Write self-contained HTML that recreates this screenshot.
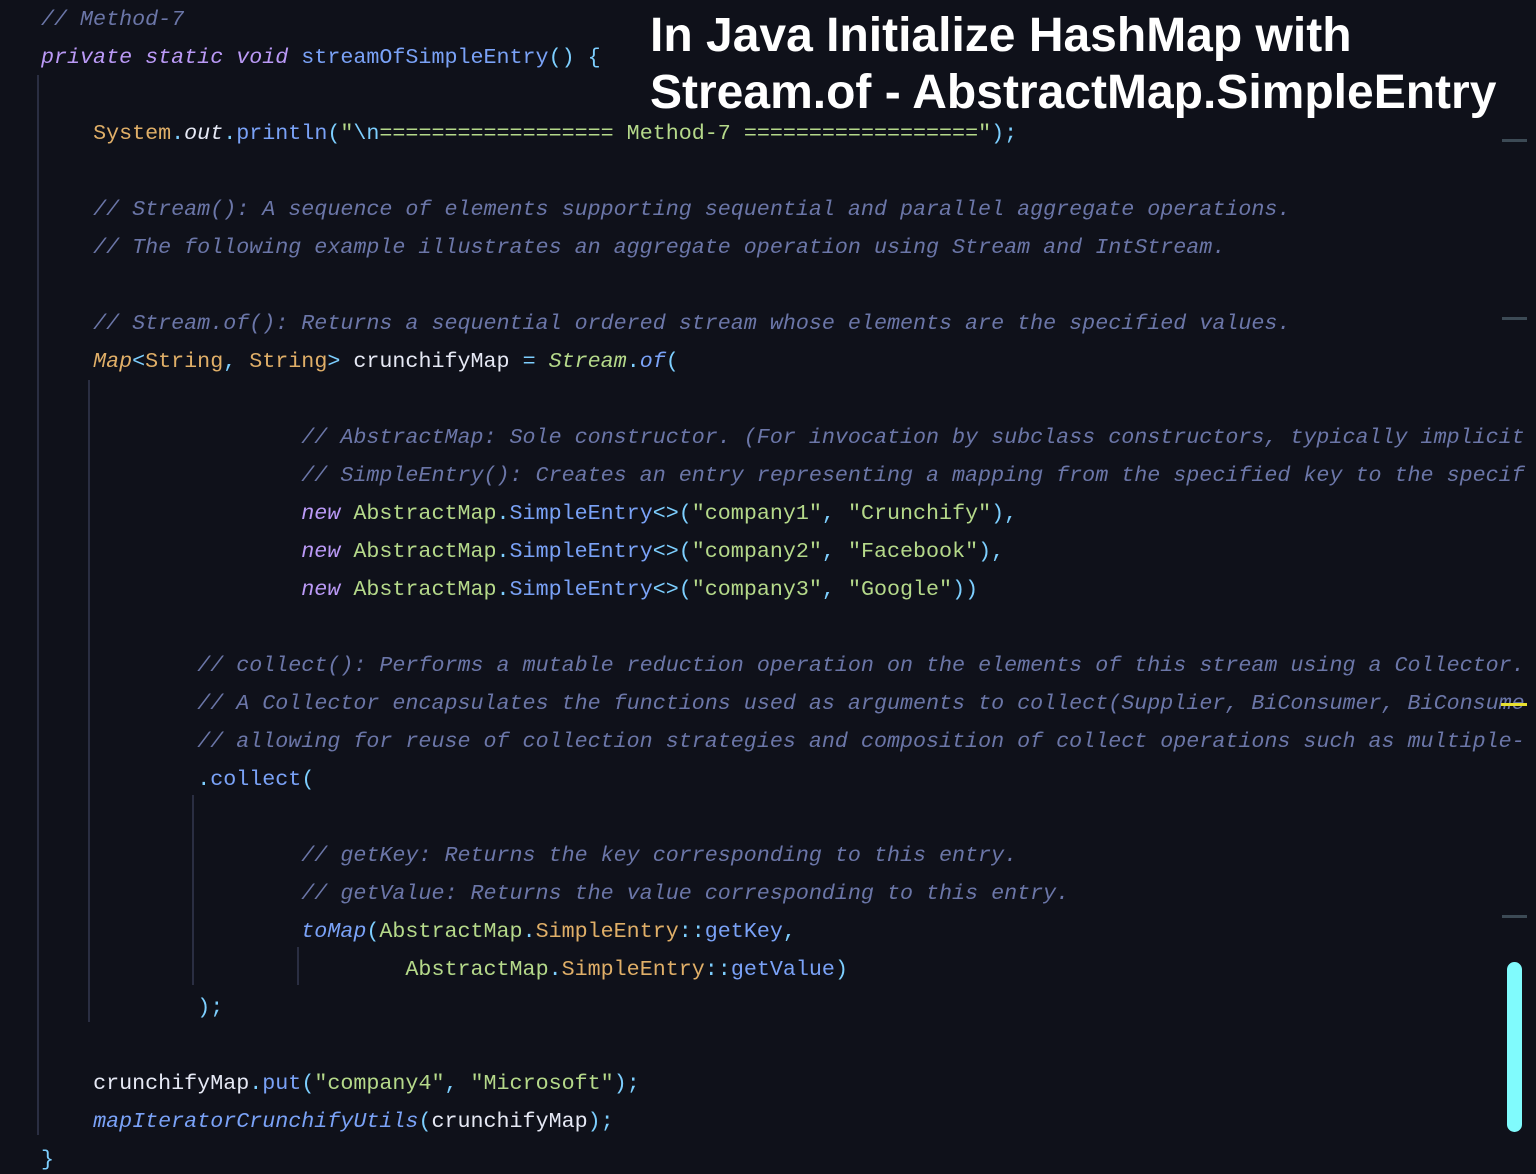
<!DOCTYPE html>
<html><head><meta charset="utf-8"><style>
html,body{margin:0;padding:0;background:#0f111a;width:1536px;height:1174px;overflow:hidden;position:relative}
pre{position:absolute;left:41px;top:1px;margin:0;font-family:"Liberation Mono",monospace;font-size:21.7px;line-height:38px;color:#c0caf5;white-space:pre}
.c{color:#6b76a8;font-style:italic}
.k{color:#bb9af7;font-style:italic}
.f{color:#7aa2f7}
.fi{color:#7aa2f7;font-style:italic}
.p{color:#7dcfff}
.s{color:#b5d98a}
.o{color:#e0af68}
.w{color:#e6e9f5}
.wi{color:#e6e9f5;font-style:italic}
.g{position:absolute;width:2px;background:#2a2e42}
.d{position:absolute;left:1502px;width:25px;height:3px;background:#3c4a55}
h1{position:absolute;left:650px;top:7px;margin:0;font-family:"Liberation Sans",sans-serif;font-weight:bold;font-size:48px;line-height:57px;color:#fff}
</style></head><body>
<div class="g" style="left:37px;top:75px;height:1060px"></div>
<div class="g" style="left:88px;top:380px;height:642px"></div>
<div class="g" style="left:192px;top:795px;height:190px"></div>
<div class="g" style="left:297px;top:947px;height:38px"></div>
<pre><span class="c">// Method-7</span>
<span class="k">private static void</span> <span class="f">streamOfSimpleEntry</span><span class="p">()</span> <span class="p">{</span>

    <span class="o">System</span><span class="p">.</span><span class="wi">out</span><span class="p">.</span><span class="f">println</span><span class="p">(</span><span class="s">"</span><span class="p">\n</span><span class="s">================== Method-7 ==================</span><span class="s">"</span><span class="p">);</span>

    <span class="c">// Stream(): A sequence of elements supporting sequential and parallel aggregate operations.</span>
    <span class="c">// The following example illustrates an aggregate operation using Stream and IntStream.</span>

    <span class="c">// Stream.of(): Returns a sequential ordered stream whose elements are the specified values.</span>
    <span class="o" style="font-style:italic">Map</span><span class="p">&lt;</span><span class="o">String</span><span class="p">,</span> <span class="o">String</span><span class="p">&gt;</span> <span class="w">crunchifyMap</span> <span class="p">=</span> <span class="s" style="font-style:italic">Stream</span><span class="p">.</span><span class="fi">of</span><span class="p">(</span>

                    <span class="c">// AbstractMap: Sole constructor. (For invocation by subclass constructors, typically implicit</span>
                    <span class="c">// SimpleEntry(): Creates an entry representing a mapping from the specified key to the specif</span>
                    <span class="k">new</span> <span class="s">AbstractMap</span><span class="p">.</span><span class="f">SimpleEntry</span><span class="p">&lt;&gt;(</span><span class="s">"company1"</span><span class="p">,</span> <span class="s">"Crunchify"</span><span class="p">),</span>
                    <span class="k">new</span> <span class="s">AbstractMap</span><span class="p">.</span><span class="f">SimpleEntry</span><span class="p">&lt;&gt;(</span><span class="s">"company2"</span><span class="p">,</span> <span class="s">"Facebook"</span><span class="p">),</span>
                    <span class="k">new</span> <span class="s">AbstractMap</span><span class="p">.</span><span class="f">SimpleEntry</span><span class="p">&lt;&gt;(</span><span class="s">"company3"</span><span class="p">,</span> <span class="s">"Google"</span><span class="p">))</span>

            <span class="c">// collect(): Performs a mutable reduction operation on the elements of this stream using a Collector.</span>
            <span class="c">// A Collector encapsulates the functions used as arguments to collect(Supplier, BiConsumer, BiConsume</span>
            <span class="c">// allowing for reuse of collection strategies and composition of collect operations such as multiple-</span>
            <span class="p">.</span><span class="f">collect</span><span class="p">(</span>

                    <span class="c">// getKey: Returns the key corresponding to this entry.</span>
                    <span class="c">// getValue: Returns the value corresponding to this entry.</span>
                    <span class="fi">toMap</span><span class="p">(</span><span class="s">AbstractMap</span><span class="p">.</span><span class="o">SimpleEntry</span><span class="p">::</span><span class="f">getKey</span><span class="p">,</span>
                            <span class="s">AbstractMap</span><span class="p">.</span><span class="o">SimpleEntry</span><span class="p">::</span><span class="f">getValue</span><span class="p">)</span>
            <span class="p">);</span>

    <span class="w">crunchifyMap</span><span class="p">.</span><span class="f">put</span><span class="p">(</span><span class="s">"company4"</span><span class="p">,</span> <span class="s">"Microsoft"</span><span class="p">);</span>
    <span class="fi">mapIteratorCrunchifyUtils</span><span class="p">(</span><span class="w">crunchifyMap</span><span class="p">);</span>
<span class="p">}</span></pre>
<h1>In Java Initialize HashMap with<br>Stream.of - AbstractMap.SimpleEntry</h1>
<div class="d" style="top:139px"></div>
<div class="d" style="top:317px"></div>
<div class="d" style="top:915px"></div>
<div style="position:absolute;left:1501px;top:703px;width:26px;height:3px;background:#e8e030"></div>
<div style="position:absolute;left:1507px;top:962px;width:15px;height:170px;border-radius:8px;background:#80fbfd"></div>
</body></html>
